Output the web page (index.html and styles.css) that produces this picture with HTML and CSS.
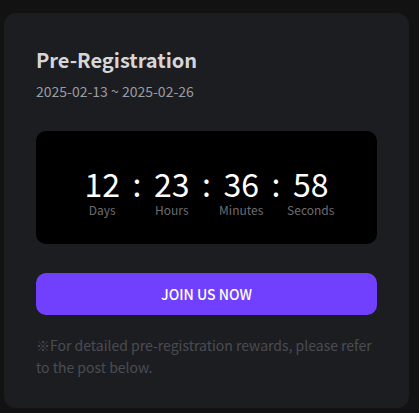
FILE: index.html
```html
<!DOCTYPE html>
<html lang="en">
<head>
<meta charset="utf-8">
<title>Pre-Registration</title>
<link rel="stylesheet" href="styles.css">
</head>
<body>
<section class="card">
  <h1 class="title">Pre-Registration</h1>
  <p class="period">2025-02-13 ~ 2025-02-26</p>
  <div class="countdown">
    <div class="unit"><span class="num">12</span><span class="label">Days</span></div>
    <span class="colon">:</span>
    <div class="unit"><span class="num">23</span><span class="label">Hours</span></div>
    <span class="colon">:</span>
    <div class="unit"><span class="num">36</span><span class="label">Minutes</span></div>
    <span class="colon">:</span>
    <div class="unit"><span class="num">58</span><span class="label">Seconds</span></div>
  </div>
  <button class="join" type="button">JOIN US NOW</button>
  <p class="note">※For detailed pre-registration rewards, please refer to the post below.</p>
</section>
</body>
</html>
```

FILE: styles.css
```css
* { box-sizing: border-box; }
html, body { background: #121213; }
body {
  margin: 0;
  padding: 13px 10px 5px 4px;
  font-family: "Noto Sans CJK KR", "Noto Sans", sans-serif;
}
.card {
  width: 405px;
  background: #1c1d21;
  border-radius: 12px;
  padding: 32px 32px 30px;
}
.title {
  margin: 0;
  font-size: 20px;
  font-weight: 700;
  line-height: normal;
  color: #d6d6d8;
}
.period {
  margin: 7px 0 0;
  font-size: 14px;
  line-height: normal;
  color: #9b9ca1;
}
.countdown {
  margin-top: 30px;
  height: 113px;
  background: #000;
  border-radius: 10px;
  padding-top: 36px;
  display: flex;
  justify-content: center;
  align-items: flex-start;
}
.unit {
  width: 48px;
  display: flex;
  flex-direction: column;
  align-items: center;
  gap: 3px;
}
.num {
  font-size: 32px;
  line-height: 32px;
  color: #fff;
  white-space: nowrap;
}
.label {
  font-size: 12px;
  line-height: 16px;
  color: #6c6d72;
  white-space: nowrap;
}
.colon {
  width: 21.5px;
  text-align: center;
  font-size: 32px;
  line-height: 32px;
  color: #fff;
}
.join {
  display: block;
  width: 100%;
  height: 42px;
  margin-top: 29px;
  border: 0;
  border-radius: 10px;
  background: #7040fe;
  color: #fff;
  font-family: inherit;
  font-size: 14px;
  font-weight: 500;
  cursor: pointer;
}
.note {
  margin: 19px 0 0;
  font-size: 14px;
  line-height: 22px;
  color: #4b4c52;
}
```
